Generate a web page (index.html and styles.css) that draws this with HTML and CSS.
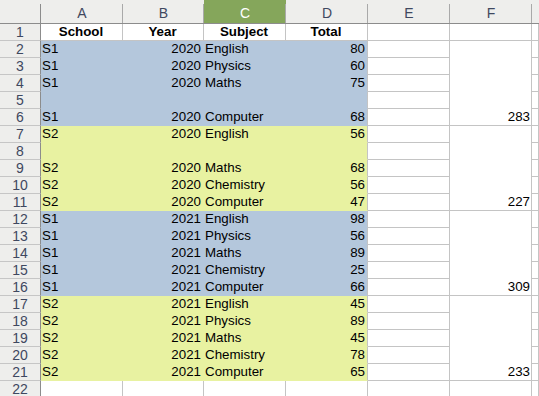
FILE: index.html
```html
<!DOCTYPE html>
<html>
<head>
<meta charset="utf-8">
<link rel="stylesheet" href="styles.css">
</head>
<body>
<div class="sheet">
  <div class="hd corner"></div>
  <div class="hd col">A</div>
  <div class="hd col">B</div>
  <div class="hd col sel">C</div>
  <div class="hd col">D</div>
  <div class="hd col">E</div>
  <div class="hd col">F</div>
  <div class="hd col last"></div>

  <div class="rn">1</div>
  <div class="c b ctr">School</div><div class="c b ctr">Year</div><div class="c b ctr">Subject</div><div class="c b ctr">Total</div><div class="c"></div><div class="c"></div><div class="c"></div>

  <div class="rn">2</div>
  <div class="c blue">S1</div><div class="c blue r">2020</div><div class="c blue">English</div><div class="c blue r dl">80</div><div class="c"></div><div class="c m r">283</div><div class="c"></div>
  <div class="rn">3</div>
  <div class="c blue">S1</div><div class="c blue r">2020</div><div class="c blue">Physics</div><div class="c blue r dl">60</div><div class="c"></div><div class="c"></div>
  <div class="rn">4</div>
  <div class="c blue">S1</div><div class="c blue r">2020</div><div class="c blue">Maths</div><div class="c blue r dl">75</div><div class="c"></div><div class="c"></div>
  <div class="rn">5</div>
  <div class="c blue"></div><div class="c blue"></div><div class="c blue"></div><div class="c blue dl"></div><div class="c"></div><div class="c"></div>
  <div class="rn">6</div>
  <div class="c blue">S1</div><div class="c blue r">2020</div><div class="c blue">Computer</div><div class="c blue r dl">68</div><div class="c"></div><div class="c"></div>

  <div class="rn">7</div>
  <div class="c yel">S2</div><div class="c yel r">2020</div><div class="c yel">English</div><div class="c yel r dl">56</div><div class="c"></div><div class="c m r">227</div><div class="c"></div>
  <div class="rn">8</div>
  <div class="c yel"></div><div class="c yel"></div><div class="c yel"></div><div class="c yel dl"></div><div class="c"></div><div class="c"></div>
  <div class="rn">9</div>
  <div class="c yel">S2</div><div class="c yel r">2020</div><div class="c yel">Maths</div><div class="c yel r dl">68</div><div class="c"></div><div class="c"></div>
  <div class="rn">10</div>
  <div class="c yel">S2</div><div class="c yel r">2020</div><div class="c yel">Chemistry</div><div class="c yel r dl">56</div><div class="c"></div><div class="c"></div>
  <div class="rn">11</div>
  <div class="c yel">S2</div><div class="c yel r">2020</div><div class="c yel">Computer</div><div class="c yel r dl">47</div><div class="c"></div><div class="c"></div>

  <div class="rn">12</div>
  <div class="c blue">S1</div><div class="c blue r">2021</div><div class="c blue">English</div><div class="c blue r dl">98</div><div class="c"></div><div class="c m r">309</div><div class="c"></div>
  <div class="rn">13</div>
  <div class="c blue">S1</div><div class="c blue r">2021</div><div class="c blue">Physics</div><div class="c blue r dl">56</div><div class="c"></div><div class="c"></div>
  <div class="rn">14</div>
  <div class="c blue">S1</div><div class="c blue r">2021</div><div class="c blue">Maths</div><div class="c blue r dl">89</div><div class="c"></div><div class="c"></div>
  <div class="rn">15</div>
  <div class="c blue">S1</div><div class="c blue r">2021</div><div class="c blue">Chemistry</div><div class="c blue r dl">25</div><div class="c"></div><div class="c"></div>
  <div class="rn">16</div>
  <div class="c blue">S1</div><div class="c blue r">2021</div><div class="c blue">Computer</div><div class="c blue r dl">66</div><div class="c"></div><div class="c"></div>

  <div class="rn">17</div>
  <div class="c yel">S2</div><div class="c yel r">2021</div><div class="c yel">English</div><div class="c yel r dl">45</div><div class="c"></div><div class="c m r">233</div><div class="c"></div>
  <div class="rn">18</div>
  <div class="c yel">S2</div><div class="c yel r">2021</div><div class="c yel">Physics</div><div class="c yel r dl">89</div><div class="c"></div><div class="c"></div>
  <div class="rn">19</div>
  <div class="c yel">S2</div><div class="c yel r">2021</div><div class="c yel">Maths</div><div class="c yel r dl">45</div><div class="c"></div><div class="c"></div>
  <div class="rn">20</div>
  <div class="c yel">S2</div><div class="c yel r">2021</div><div class="c yel">Chemistry</div><div class="c yel r dl">78</div><div class="c"></div><div class="c"></div>
  <div class="rn">21</div>
  <div class="c yel">S2</div><div class="c yel r">2021</div><div class="c yel">Computer</div><div class="c yel r dl">65</div><div class="c"></div><div class="c"></div>

  <div class="rn">22</div>
  <div class="c"></div><div class="c"></div><div class="c"></div><div class="c"></div><div class="c"></div><div class="c"></div><div class="c"></div>
</div>
</body>
</html>
```

FILE: styles.css
```css
html, body {
  margin: 0;
  padding: 0;
  background: #ffffff;
  overflow: hidden;
}

.sheet {
  width: 539px;
  display: grid;
  grid-template-columns: 41px 82px 81px 82px 82px 82px 82px 1fr;
  grid-template-rows: 24px repeat(22, 17px);
  font-family: "Liberation Sans", Arial, sans-serif;
  font-size: 13.33px;
  color: #000;
}

.hd {
  box-sizing: border-box;
  background: linear-gradient(#a9a9a9, #a9a9a9) no-repeat right bottom / 1px 19px, #eeeeec;
  border-bottom: 1px solid #8c8c8c;
  padding-top: 4px;
  line-height: 19px;
  text-align: center;
  font-size: 14px;
  color: #3f4860;
}

.hd.corner {
  background: linear-gradient(#8c8c8c, #8c8c8c) no-repeat right bottom / 1px 19px, #eeeeec;
}

.hd.sel {
  background: linear-gradient(#a9a9a9, #a9a9a9) no-repeat right bottom / 1px 19px, #85a65b;
  color: #ffffff;
}

.hd.last {
  background: #eeeeec;
}

.rn {
  box-sizing: border-box;
  background: #eeeeec;
  border-right: 1px solid #8c8c8c;
  border-bottom: 1px solid #c6c6c6;
  line-height: 16px;
  text-align: center;
  font-size: 14px;
  color: #3f4860;
}

.c {
  box-sizing: border-box;
  border-right: 1px solid #c4c4c4;
  border-bottom: 1px solid #c4c4c4;
  line-height: 16px;
  padding: 0 2px 0 1px;
  white-space: nowrap;
  overflow: hidden;
}

.c.b {
  font-weight: bold;
}

.c.ctr {
  text-align: center;
}

.c.r {
  text-align: right;
  padding: 0 2px 0 1px;
}

.c.blue {
  background: #b4c7dc;
  border-color: #b4c7dc;
}

.c.yel {
  background: #e8f2a1;
  border-color: #e8f2a1;
}

.c.dl {
  border-right-color: #c4c4c4;
}

.c.m {
  grid-row: span 5;
  display: flex;
  align-items: flex-end;
  justify-content: flex-end;
  padding-right: 1px;
}
```
